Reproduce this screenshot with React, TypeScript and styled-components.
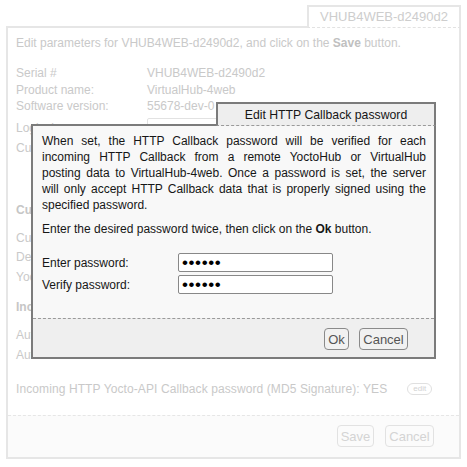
import React from 'react';
import styled, { createGlobalStyle } from 'styled-components';

const Global = createGlobalStyle`
  html, body { margin: 0; padding: 0; background: #ffffff; }
  body { font-family: "Liberation Sans", Arial, sans-serif; font-size: 12px; }
  * { box-sizing: border-box; }
`;

const Page = styled.div`
  position: relative;
  width: 467px;
  height: 467px;
  padding: 5px 6px 0 6px;
  overflow: hidden;
`;

/* ---------- background window (faded) ---------- */
const Window = styled.div`
  display: flex;
  flex-direction: column;
  width: 455px;
  height: 454px;
`;

const HeadRow = styled.div`
  display: flex;
  align-items: flex-end;
`;

const HeadFill = styled.div<{ $line: string }>`
  flex: 1;
  border-bottom: 2px solid ${(p) => p.$line};
`;

const WinTab = styled.div`
  width: 154px;
  height: 23px;
  border: 2px solid #e6e6e6;
  border-bottom: 1px dashed #e2e2e2;
  display: flex;
  align-items: center;
  justify-content: center;
  color: #cdcdcd;
  font-size: 13px;
  padding-bottom: 1px;
`;

const Panel = styled.div`
  flex: 1;
  display: flex;
  flex-direction: column;
  border: 2px solid #e6e6e6;
  border-top: none;
  color: #c9c9c9;
`;

const PanelBody = styled.div`
  flex: 1;
  padding: 7px 8px 0 8px;
  line-height: 16px;
`;

const Intro = styled.p`
  margin: 0 0 14px 0;
  b { color: #c0c0c0; }
`;

const InfoGrid = styled.div`
  display: grid;
  grid-template-columns: 131px 1fr;
  line-height: 16.5px;
`;

const FieldRow = styled.div`
  display: grid;
  grid-template-columns: 131px 1fr;
  align-items: center;
  height: 20px;
`;

const GhostInput = styled.div`
  width: 160px;
  height: 20px;
  border: 1px solid #e2e2e2;
  border-radius: 2px;
  background: #fff;
`;

const SectionTitle = styled.div<{ $top: number }>`
  font-weight: bold;
  margin-top: ${(p) => p.$top}px;
  margin-bottom: 11px;
  line-height: 16px;
  color: #c6c6c6;
`;

const PlainRow = styled.div`
  line-height: 19.5px;
`;

const PwdLine = styled.div`
  display: flex;
  align-items: center;
  margin-top: 16px;
  line-height: 16px;
  white-space: nowrap;
  letter-spacing: 0.1px;
`;

const EditPill = styled.span`
  margin-left: 20px;
  display: inline-flex;
  align-items: center;
  justify-content: center;
  width: 25px;
  height: 12px;
  border: 1px solid #e0e0e0;
  border-radius: 6px;
  font-size: 8px;
  letter-spacing: 0;
  color: #d2d2d2;
`;

const PanelFooter = styled.div`
  height: 42px;
  border-top: 1px dashed #e6e6e6;
  background: #fbfbfb;
  display: flex;
  justify-content: flex-end;
  align-items: flex-start;
  gap: 11px;
  padding: 9px 25px 0 0;
`;

const GhostButton = styled.div<{ $w: number }>`
  width: ${(p) => p.$w}px;
  height: 22px;
  border: 1px solid #e2e2e2;
  border-radius: 4px;
  display: flex;
  align-items: center;
  justify-content: center;
  color: #d4d4d4;
  font-size: 13px;
`;

/* ---------- dialog ---------- */
const Dialog = styled.div`
  position: absolute;
  left: 31px;
  top: 102px;
  width: 405px;
  display: flex;
  flex-direction: column;
  color: #161616;
`;

const DlgTab = styled.div`
  width: 220px;
  height: 24px;
  border: 2px solid #7b7b7b;
  border-bottom: 1px dashed #9a9a9a;
  background: #eeeeee;
  display: flex;
  align-items: center;
  justify-content: center;
  font-size: 12.25px;
  padding-top: 1px;
`;

const DlgBox = styled.div`
  border: 2px solid #7b7b7b;
  border-top: none;
  background: #f8f8f8;
  display: flex;
  flex-direction: column;
`;

const DlgBody = styled.div`
  padding: 7px 8px 24px 9px;
  line-height: 16px;
`;

const Para = styled.div`
  margin: 0 0 8px 0;
`;

const Line = styled.div<{ $last?: boolean }>`
  text-align: justify;
  text-align-last: ${(p) => (p.$last ? 'left' : 'justify')};
  white-space: nowrap;
`;

const FormRows = styled.div`
  display: flex;
  flex-direction: column;
  gap: 3px;
  margin-top: 16px;
`;

const FormRow = styled.label`
  display: grid;
  grid-template-columns: 136px 155px;
  align-items: center;
`;

const PwdInput = styled.input`
  height: 19px;
  width: 155px;
  border: 1px solid #888888;
  border-radius: 2px;
  background: #ffffff;
  padding: 0 3px;
  font-family: "Liberation Sans", Arial, sans-serif;
  font-size: 17px;
  letter-spacing: 0.6px;
  color: #000;
  outline: none;
`;

const DlgFooter = styled.div`
  border-top: 1px dashed #9a9a9a;
  background: #efefef;
  display: flex;
  justify-content: flex-end;
  gap: 10px;
  padding: 9px 26px 7px 0;
`;

const DlgButton = styled.button<{ $w: number }>`
  width: ${(p) => p.$w}px;
  height: 22px;
  border: 1px solid #8a8a8a;
  border-radius: 4px;
  background: #f1f1f1;
  color: #555555;
  font-family: "Liberation Sans", Arial, sans-serif;
  font-size: 13px;
  padding: 0;
  display: flex;
  align-items: center;
  justify-content: center;
`;

const introLines = [
  'When set, the HTTP Callback password will be verified for each',
  'incoming HTTP Callback from a remote YoctoHub or VirtualHub',
  'posting data to VirtualHub-4web. Once a password is set, the server',
  'will only accept HTTP Callback data that is properly signed using the',
  'specified password.',
];

export default function App() {
  return (
    <>
      <Global />
      <Page>
        <Window>
          <HeadRow>
            <HeadFill $line="#e6e6e6" />
            <WinTab>VHUB4WEB-d2490d2</WinTab>
          </HeadRow>
          <Panel>
            <PanelBody>
              <Intro>
                Edit parameters for VHUB4WEB-d2490d2, and click on the <b>Save</b> button.
              </Intro>
              <InfoGrid>
                <span>Serial #</span>
                <span>VHUB4WEB-d2490d2</span>
                <span>Product name:</span>
                <span>VirtualHub-4web</span>
                <span>Software version:</span>
                <span>55678-dev-0</span>
              </InfoGrid>
              <FieldRow style={{ marginTop: 3 }}>
                <span>Logical name:</span>
                <GhostInput />
              </FieldRow>
              <FieldRow>
                <span>Custom UI:</span>
                <span />
              </FieldRow>
              <SectionTitle $top={44}>Custom settings</SectionTitle>
              <PlainRow>Current state:</PlainRow>
              <PlainRow>Detached</PlainRow>
              <PlainRow>YoctoHub</PlainRow>
              <SectionTitle $top={12}>Incoming connections</SectionTitle>
              <PlainRow>Authentication</PlainRow>
              <PlainRow>Authentication</PlainRow>
              <PwdLine>
                Incoming HTTP Yocto-API Callback password (MD5 Signature): YES
                <EditPill>edit</EditPill>
              </PwdLine>
            </PanelBody>
            <PanelFooter>
              <GhostButton $w={37}>Save</GhostButton>
              <GhostButton $w={49}>Cancel</GhostButton>
            </PanelFooter>
          </Panel>
        </Window>

        <Dialog>
          <HeadRow>
            <HeadFill $line="#7b7b7b" />
            <DlgTab>Edit HTTP Callback password</DlgTab>
          </HeadRow>
          <DlgBox>
            <DlgBody>
              <Para>
                {introLines.map((l, i) => (
                  <Line key={i} $last={i === introLines.length - 1}>
                    {l}
                  </Line>
                ))}
              </Para>
              <Para>
                Enter the desired password twice, then click on the <b>Ok</b> button.
              </Para>
              <FormRows>
                <FormRow>
                  <span>Enter password:</span>
                  <PwdInput type="password" defaultValue="secret" />
                </FormRow>
                <FormRow>
                  <span>Verify password:</span>
                  <PwdInput type="password" defaultValue="secret" />
                </FormRow>
              </FormRows>
            </DlgBody>
            <DlgFooter>
              <DlgButton $w={25}>Ok</DlgButton>
              <DlgButton $w={49}>Cancel</DlgButton>
            </DlgFooter>
          </DlgBox>
        </Dialog>
      </Page>
    </>
  );
}
